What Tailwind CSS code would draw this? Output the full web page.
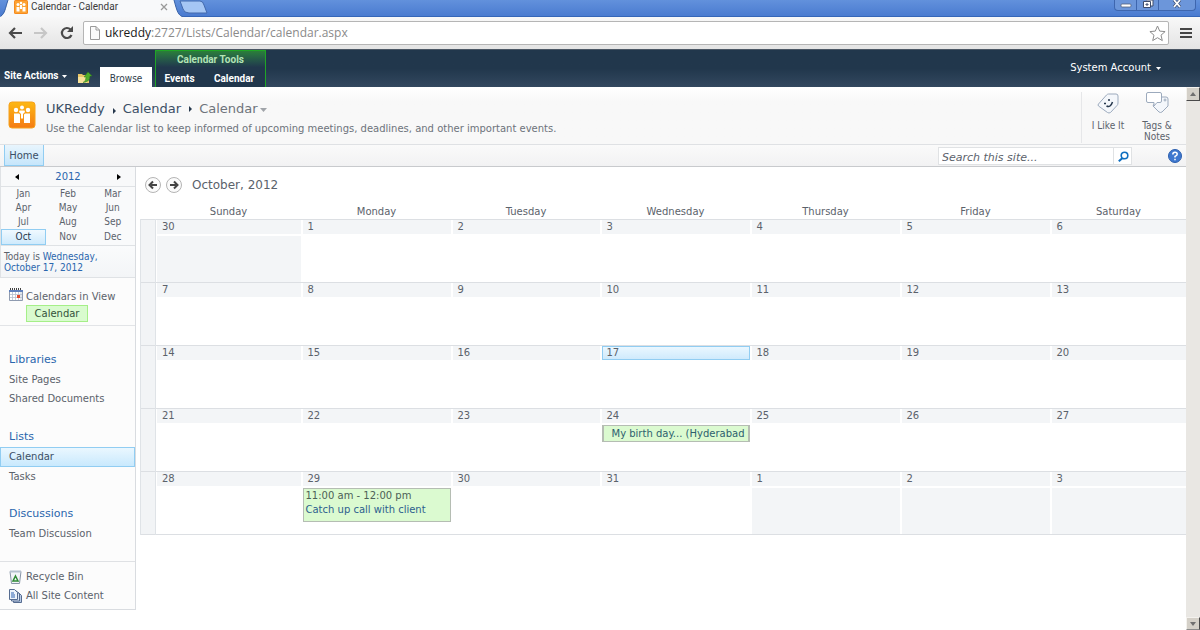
<!DOCTYPE html>
<html lang="en">
<head>
<meta charset="utf-8">
<title>Calendar - Calendar</title>
<script src="https://cdn.jsdelivr.net/npm/@tailwindcss/browser@4"></script>
</head>
<body class="flex h-screen flex-col overflow-hidden bg-white font-['DejaVu_Sans',sans-serif] text-[10px] leading-[14px] text-[#5b626b]">

<!-- Browser tab strip -->
<header class="flex h-[17px] shrink-0 items-start justify-between border-b border-[#3566b8] bg-linear-to-b from-[#6291dc] to-[#4a7bd0]">
  <div class="relative flex h-[17px] w-[208px] items-start">
    <svg class="absolute top-0 left-0" width="208" height="17" viewBox="0 0 208 17" fill="none">
      <path d="M0 17C4 15 5 11 8 0H174C177 11 178 16 184 17Z" fill="#f8f9fa"/>
      <path d="M1 16C5 13 5 9 8 0M174 0C177 11 178 16 184 17" stroke="#3a63a8"/>
      <path d="M180 1H200Q203 1 204 5L207 13H189Q184 13 183 9Z" fill="#a5c6f4" stroke="#4169ad"/>
    </svg>
    <div class="relative flex h-[14px] w-[168px] items-center pl-[14px] font-['Roboto',sans-serif] text-[10px] text-[#3a3a3a]">
      <svg width="14" height="14" viewBox="0 0 28 28"><rect width="28" height="28" rx="3" fill="#f68b1e"/><rect x="2" y="2" width="24" height="24" fill="#fca334"/><g fill="#fff"><circle cx="8" cy="9" r="3"/><circle cx="14" cy="6" r="2.500"/><circle cx="20" cy="9" r="3"/><path d="M5 14h6v9H5zM17 14h6v9h-6zM12 10h4v8h-4z"/></g></svg>
      <span class="ml-[3px] grow">Calendar - Calendar</span>
      <button aria-label="Close tab"><svg width="8" height="8" viewBox="0 0 8 8"><path d="M1 1l6 6M7 1L1 7" stroke="#9a9a9a" stroke-width="1.300"/></svg></button>
    </div>
  </div>
  <div class="mr-[4px] flex h-[11px] divide-x divide-[#3e66ae] rounded-b border border-t-0 border-[#3e66ae] bg-[#6c96da]">
    <button aria-label="Minimize" class="flex w-[22px] justify-center"><svg width="12" height="10" viewBox="0 0 12 10"><rect x="1" y="4" width="10" height="3" rx="1" fill="#fff" stroke="#52617c" stroke-width=".8"/></svg></button>
    <button aria-label="Restore" class="flex w-[22px] justify-center"><svg width="12" height="10" viewBox="0 0 12 10" fill="#fff" stroke="#3c4b6b"><path d="M4 0h7v6H9"/><path d="M1.500 1.500h7v6h-7z"/><path d="M4 4h2v1H4z"/></svg></button>
    <button aria-label="Close window" class="flex w-[36px] justify-center"><svg width="12" height="10" viewBox="0 0 12 10"><path d="M3 0l6 7M9 0L3 7" stroke="#3c4b6b" stroke-width="3"/><path d="M3 0l6 7M9 0L3 7" stroke="#fff" stroke-width="1.800"/></svg></button>
  </div>
</header>

<!-- Browser toolbar -->
<div class="flex h-[32px] shrink-0 items-center bg-linear-to-b from-[#f8f8f8] to-[#e4e4e4] pr-[8px] pl-[8px]">
  <button aria-label="Back"><svg width="14" height="14" viewBox="0 0 14 14" fill="none" stroke="#4a4a4a" stroke-width="2.200"><path d="M14 7H2M7 2L2 7l5 5"/></svg></button>
  <button aria-label="Forward" class="ml-[12px]"><svg width="14" height="14" viewBox="0 0 14 14" fill="none" stroke="#c6c6c6" stroke-width="2.200"><path d="M0 7h12M7 2l5 5-5 5"/></svg></button>
  <button aria-label="Reload" class="ml-[11px]"><svg width="15" height="14" viewBox="0 0 15 14" fill="none"><path d="M11.500 3.500A5 5 0 1 0 12.500 9" stroke="#4a4a4a" stroke-width="2.200"/><path d="M14 0v6H8z" fill="#4a4a4a"/></svg></button>
  <div class="ml-[9px] flex h-[24px] grow items-center rounded-[2px] border border-[#b5b5b5] bg-white px-[6px]">
    <svg width="10" height="14" viewBox="0 0 10 14" fill="#fafafa" stroke="#9a9a9a"><path d="M.5.5h5.500l3.500 3.500v9.500h-9zM6 .5V4h3.500"/></svg>
    <div contenteditable role="textbox" aria-label="Address" class="ml-[5px] grow font-['Open_Sans',sans-serif] text-[12px] leading-[18px] text-[#8a8a8a]"><span class="text-[#1a1a1a]">ukreddy</span>:2727/Lists/Calendar/calendar.aspx</div>
    <button aria-label="Bookmark" class="-mr-[4px]"><svg width="17" height="17" viewBox="0 0 17 17" fill="#fff" stroke="#8c8c8c"><path d="M8.500 1l2.200 5.100 5.400.5-4.100 3.600 1.300 5.400-4.800-2.900-4.800 2.900L5 10.200.9 6.600l5.400-.5z"/></svg></button>
  </div>
  <button aria-label="Menu" class="ml-[11px]"><svg width="12" height="12" viewBox="0 0 12 12"><path d="M0 2h12M0 6h12M0 10h12" stroke="#454545" stroke-width="2"/></svg></button>
</div>

<!-- Ribbon -->
<div class="flex h-[38px] shrink-0 items-end justify-between border-t border-[#4a5664] bg-linear-to-b from-[#21374c] from-50% to-[#33485f] font-['Roboto',sans-serif] font-bold text-white">
  <div class="flex h-full items-end">
    <button class="mb-[4px] ml-[4px] flex w-[74px] items-center gap-[4px] whitespace-nowrap">Site Actions <svg width="5" height="3" viewBox="0 0 5 3"><path d="M0 0h5L2.500 3z" fill="#fff"/></svg></button>
    <button aria-label="Navigate up" class="mb-[3px]"><svg width="14" height="13" viewBox="0 0 14 13"><path d="M0 3h4l1 1h6v8H0z" fill="#e9c667"/><path d="M0 6h11l-2 6H0z" fill="#f8e29a"/><path d="M5 11.500q3-1 3-5.500H6l4-5 4 4h-2q0 6-7 6.500z" fill="#52ad2b" stroke="#2e7d18" stroke-width=".5"/></svg></button>
    <button class="ml-[8px] h-[20px] w-[52px] bg-white pt-[3px] font-['DejaVu_Sans_Condensed','DejaVu_Sans',sans-serif] text-[10px] font-normal text-[#2f3c4a]">Browse</button>
    <div class="ml-[3px] flex h-full w-[111px] flex-col border-x border-t border-[#1fa526] bg-linear-to-b from-[#2a7f38] to-[#21374c] to-45%">
      <div class="pt-[2px] text-center text-[#b3e5b5]">Calendar Tools</div>
      <div class="flex pt-[5px]"><button class="w-[48px]">Events</button><button class="w-[63px]">Calendar</button></div>
    </div>
  </div>
  <button class="mr-[39px] mb-[12px] flex items-center gap-[5px] font-['DejaVu_Sans',sans-serif] font-normal">System Account <svg width="5" height="3" viewBox="0 0 5 3"><path d="M0 0h5L2.500 3z" fill="#fff"/></svg></button>
</div>

<div class="flex min-h-0 grow">
  <div class="flex min-w-0 grow flex-col">

    <!-- Title area -->
    <div class="flex h-[58px] shrink-0 border-b border-[#dfe1e4] bg-linear-to-b from-white to-[#f8f8f8] to-25%">
      <svg class="mt-[14px] ml-[8px]" width="28" height="29" viewBox="0 0 28 29"><defs><linearGradient id="o" x2="0" y2="1"><stop stop-color="#fdb813"/><stop offset="1" stop-color="#f47b14"/></linearGradient></defs><rect x="1" y="1" width="26" height="26" rx="3" fill="url(#o)" stroke="#f6a21c"/><g fill="#fff"><circle cx="8" cy="9" r="2.200"/><circle cx="14" cy="6.500" r="2"/><circle cx="20" cy="9" r="2.200"/><path d="M6 12.500h5l1 1V22H6zM17 12.500h5V22h-6v-8.500zM11.500 9.500h5l.5 1.500-2 2v4.500h-2V13l-2-2z"/></g></svg>
      <div class="ml-[10px] grow pt-[13px]">
        <h1 class="flex items-center text-[13px] leading-[18px] text-[#3b4f65]">
          <a href="#">UKReddy</a>
          <svg class="mx-[7px] mt-[3px]" width="4" height="6" viewBox="0 0 4 6"><path d="M1 0l3 3-3 3z" fill="#26384d"/></svg>
          <a href="#">Calendar</a>
          <svg class="mx-[7px]" width="4" height="6" viewBox="0 0 4 6"><path d="M1 0l3 3-3 3z" fill="#26384d"/></svg>
          <button class="flex items-center gap-[2px] text-[#6d737b]">Calendar <svg class="mt-[2px]" width="7" height="4" viewBox="0 0 7 4"><path d="M0 0h7L3.500 4z" fill="#a0a4a9"/></svg></button>
        </h1>
        <p class="mt-[4px] text-[10px] text-[#6d737b]">Use the Calendar list to keep informed of upcoming meetings, deadlines, and other important events.</p>
      </div>
      <div class="mt-[5px] mb-px flex border-l border-[#e6e7e9] pl-[5px] text-center font-['DejaVu_Sans_Condensed','DejaVu_Sans',sans-serif] leading-[11px]">
        <button class="flex w-[42px] flex-col items-center justify-start whitespace-nowrap"><svg width="22" height="22" viewBox="0 0 22 22" fill="#f4f7fb" stroke="#9caabd"><path d="M1.500 12L9.500 3q1-1 2-1h7.500q2 0 2 2v7q0 1.500-1 2.500l-6.500 7q-1.500 1-3 0L1.500 14q-1-1 0-2z"/><path d="M9.500 14q4 2 6-4" fill="none" stroke="#26384d" stroke-width="1.500"/><path d="M7 11.500h2M11 8h2" stroke="#26384d" stroke-width="1.500"/></svg><span class="mt-[6px]">I Like It</span></button>
        <button class="ml-[7px] flex w-[42px] flex-col items-center justify-start"><svg width="23" height="22" viewBox="0 0 23 22" fill="#f4f7fb" stroke="#9caabd"><path d="M12 5h8q2 0 2 2v7l-6 6q-1.500 1-3 0l-6-6z"/><path d="M2 .5h12q1.500 0 1.500 1.500v7q0 1.500-1.500 1.500h-3L8 14v-3.500H2Q.5 10.500.5 9V2Q.5.5 2 .5z" fill="#fff"/><circle cx="19" cy="8" r="1"/></svg><span class="mt-[6px]">Tags &amp; Notes</span></button>
        <span class="w-[8px]"></span>
      </div>
    </div>

    <!-- Top navigation and search -->
    <div class="flex h-[22px] shrink-0 items-stretch border-b border-[#c8cacd] bg-linear-to-b from-[#fafafa] to-[#f2f2f3] pl-[4px]">
      <a href="#" class="w-[40px] border border-t-0 border-[#91cdf2] bg-linear-to-b from-[#e8f5fd] to-[#c6e6fb] pt-[4px] text-center text-[#3b4f65]">Home</a>
      <span class="grow"></span>
      <form class="mt-[2px] flex h-[18px] border border-[#e0e2e4] bg-white" onsubmit="return false">
        <input type="text" aria-label="Search this site" placeholder="Search this site..." class="h-[17px] w-[174px] px-[3px] pt-[2px] text-[11px] leading-[15px] italic outline-none placeholder:text-[#5b626b]">
        <button aria-label="Search" class="w-[18px] border-l border-[#e0e2e4] pl-[4px]"><svg width="11" height="11" viewBox="0 0 11 11" fill="none" stroke="#0f6fc0"><circle cx="6.500" cy="4.500" r="3.300" stroke-width="1.600"/><path d="M4.500 7L.8 10.300" stroke-width="2"/></svg></button>
      </form>
      <button aria-label="Help" class="mr-[4px] ml-[36px]"><svg width="14" height="14" viewBox="0 0 14 14"><circle cx="7" cy="7" r="6.500" fill="#3e78cf" stroke="#2d5fae"/><path d="M4.800 5.500q0-2.300 2.200-2.300T9.200 5.200Q9.200 6.300 7 7.400V8.500M7 9.700v1.500" fill="none" stroke="#fff" stroke-width="1.500"/></svg></button>
    </div>

    <div class="flex min-h-0 grow">

      <!-- Left column -->
      <aside class="w-[136px] shrink-0 self-start border-r border-b border-[#d9dce0] bg-[#fcfcfc]">
        <div class="font-['DejaVu_Sans_Condensed','DejaVu_Sans',sans-serif]">
          <div class="flex h-[20px] items-center justify-between border-b border-l border-[#dfe2e5] bg-[#f8f9fa] px-[14px]">
            <button aria-label="Previous year"><svg width="4" height="6" viewBox="0 0 4 6"><path d="M4 0v6L0 3z"/></svg></button>
            <a href="#" class="font-['DejaVu_Sans',sans-serif] text-[#2a66ad]">2012</a>
            <button aria-label="Next year"><svg width="4" height="6" viewBox="0 0 4 6"><path d="M0 0v6l4-3z"/></svg></button>
          </div>
          <div class="grid grid-cols-3 border-b border-l border-[#dfe2e5] bg-[#f9fafb] text-center">
            <button class="h-[14px]">Jan</button><button>Feb</button><button>Mar</button>
            <button class="h-[14px]">Apr</button><button>May</button><button>Jun</button>
            <button class="h-[14px]">Jul</button><button>Aug</button><button>Sep</button>
            <button class="h-[16px] border border-[#91cdf2] bg-linear-to-b from-[#f0f9ff] to-[#cfeafc] text-[#26384d]">Oct</button><button>Nov</button><button>Dec</button>
          </div>
          <p class="border-b border-l border-[#dfe2e5] bg-linear-to-b from-[#fafbfc] to-[#f3f5f7] pt-[5px] pb-[4px] pl-[3px] leading-[11px]">Today is <a href="#" class="text-[#2a66ad]">Wednesday,<br>October 17, 2012</a></p>
        </div>
        <div class="h-[48px] border-b border-[#e2e4e7] pt-[10px] pl-[9px]">
          <div class="flex h-[17px] items-center gap-[3px] whitespace-nowrap">
            <svg class="shrink-0 self-start" width="14" height="13" viewBox="0 0 14 13"><path d="M.5 2.500h13v10H.5z" fill="#fff" stroke="#8f9bb0"/><path d="M0 2h14v2H0z" fill="#5f80bd"/><path d="M1 1h12" stroke="#444" stroke-width="2" stroke-dasharray="1 1"/><path d="M3.500 4v8M6.500 4v8M9.500 4v8M12 4v8M1 6.500h12M1 9.500h12" stroke="#b6bfce" stroke-width=".8"/><path d="M8 7h3v3H8z" fill="#e0482c"/></svg>
            <span>Calendars in View</span>
          </div>
          <button class="ml-[17px] block h-[17px] w-[62px] border border-[#a5ef88] bg-[#d9fbcf] text-[#33523b]">Calendar</button>
        </div>
        <nav class="pt-[24px] leading-[20px]">
          <h2 class="pl-[9px] text-[11px]"><a href="#" class="text-[#2a66ad]">Libraries</a></h2>
          <a href="#" class="block h-[19px] pl-[9px]">Site Pages</a>
          <a href="#" class="block h-[19px] pl-[9px]">Shared Documents</a>
          <h2 class="mt-[19px] pl-[9px] text-[11px]"><a href="#" class="text-[#2a66ad]">Lists</a></h2>
          <a href="#" class="block h-[20px] border border-[#91cdf2] bg-linear-to-b from-[#eaf7ff] to-[#c9e9fd] pl-[8px] leading-[18px] text-[#3b4f65]">Calendar</a>
          <a href="#" class="block h-[19px] pl-[9px]">Tasks</a>
          <h2 class="mt-[18px] pl-[9px] text-[11px]"><a href="#" class="text-[#2a66ad]">Discussions</a></h2>
          <a href="#" class="block pl-[9px]">Team Discussion</a>
        </nav>
        <div class="mt-[17px] h-[48px] border-t border-[#dfe1e4] pt-[5px] pl-[9px] leading-[20px]">
          <a href="#" class="flex h-[19px] items-center gap-[4px]"><svg width="13" height="14" viewBox="0 0 13 14"><path d="M1 1.500h11l-1.500 12h-8z" fill="#f2f5f8" stroke="#8794a6"/><path d="M1 1.500h11" stroke="#b6c2d0" stroke-width="2"/><path d="M6.500 6L9 11H4z" fill="none" stroke="#2f8a35" stroke-width="1.500"/></svg>Recycle Bin</a>
          <a href="#" class="flex h-[20px] items-center gap-[4px] whitespace-nowrap"><svg width="13" height="14" viewBox="0 0 13 14" stroke="#566c90"><path d="M4.500 3.500h5l3 3v7h-8z" fill="#b9cbe6"/><path d="M2.500 2h5l3 3v7h-8z" fill="#dbe6f5"/><path d="M.5.5h5l3 3v7h-8z" fill="#eef4fb"/><path d="M2 4h3M2 6h4M2 8h4" stroke="#2f62b0"/></svg>All Site Content</a>
        </div>
      </aside>

      <!-- Month view -->
      <main class="ml-[4px] min-w-0 grow">
        <div class="flex h-[38px] items-center pb-[3px] pl-[5px]">
          <button aria-label="Previous month"><svg width="16" height="16" viewBox="0 0 16 16"><circle cx="8" cy="8" r="7.500" fill="#fbfbfb" stroke="#b4b4b4"/><path d="M12 8H6M8 4.500L4.500 8 8 11.500" fill="none" stroke="#444" stroke-width="2"/></svg></button>
          <button aria-label="Next month" class="ml-[5px]"><svg width="16" height="16" viewBox="0 0 16 16"><circle cx="8" cy="8" r="7.500" fill="#fbfbfb" stroke="#b4b4b4"/><path d="M4 8h6M8 4.500L11.500 8 8 11.500" fill="none" stroke="#444" stroke-width="2"/></svg></button>
          <h2 class="ml-[10px] text-[12px] text-[#5b626b]">October, 2012</h2>
        </div>
        <table class="w-full table-fixed border-collapse text-left">
          <colgroup><col class="w-[15px]"><col class="w-[146px]"><col class="w-[150px]"><col class="w-[149px]"><col class="w-[150px]"><col class="w-[150px]"><col class="w-[150px]"><col class="w-[136px]"></colgroup>
          <thead><tr class="h-[14px] text-center"><td></td><th class="p-0 font-normal">Sunday</th><th class="p-0 font-normal">Monday</th><th class="p-0 font-normal">Tuesday</th><th class="p-0 font-normal">Wednesday</th><th class="p-0 font-normal">Thursday</th><th class="p-0 font-normal">Friday</th><th class="p-0 font-normal">Saturday</th></tr></thead>
          <tbody id="weeks"></tbody>
        </table>
      </main>
    </div>
  </div>

  <!-- Page scrollbar -->
  <div class="flex w-[14px] shrink-0 flex-col justify-between bg-[#e9e7e3]">
    <button aria-label="Scroll up" class="flex h-[14px] items-center justify-center border border-t-[#f4f2ee] border-r-[#4a4a4a] border-b-[#4a4a4a] border-l-[#f4f2ee] bg-[#d4d0c8]"><svg width="6" height="4" viewBox="0 0 6 4"><path d="M0 4h6L3 0z" fill="#6f6f6f"/></svg></button>
    <button aria-label="Scroll down" class="flex h-[13px] items-center justify-center border border-t-[#f4f2ee] border-r-[#4a4a4a] border-b-[#8a8a8a] border-l-[#f4f2ee] bg-[#d4d0c8]"><svg width="6" height="4" viewBox="0 0 6 4"><path d="M0 0h6L3 4z" fill="#6f6f6f"/></svg></button>
  </div>
</div>

<script>
  const weeks = [
    [30, 1, 2, 3, 4, 5, 6],
    [7, 8, 9, 10, 11, 12, 13],
    [14, 15, 16, 17, 18, 19, 20],
    [21, 22, 23, 24, 25, 26, 27],
    [28, 29, 30, 31, 1, 2, 3]
  ];
  const events = {
    24: '<a href="#" class="mr-px mt-[2px] block h-[17px] overflow-hidden border border-x-2 border-[#b5bdb3] bg-[#dbfad0] pl-[8px] leading-[15px] whitespace-nowrap text-[#2d5f6e]">My birth day... (Hyderabad</a>',
    29: '<a href="#" class="mr-px mt-[2px] block h-[34px] overflow-hidden border border-[#b5bdb3] bg-[#dbfad0] pl-[2px] whitespace-nowrap text-[#4c5f57]">11:00 am - 12:00 pm<br><span class="text-[#2d5f8e]">Catch up call with client</span></a>'
  };
  document.getElementById('weeks').innerHTML = weeks.map((week, w) =>
    '<tr class="h-[63px] border-y border-[#dcdfe3] align-top"><td class="border-l border-r border-[#dfe3e7] bg-[#f2f4f6] p-0"></td>' +
    week.map((day, d) => {
      const outside = (w === 0 && d === 0) || (w === 4 && d > 3);
      const today = w === 2 && day === 17;
      const event = !outside && (w === 3 || w === 4) && events[day] || '';
      const band = today
        ? 'mr-px h-[14px] border border-[#91cdf2] bg-linear-to-b from-[#eaf7ff] to-[#cfeafc] pl-[4px] leading-[12px]'
        : 'mr-px h-[14px] bg-[#f3f5f7] pl-[5px]';
      return '<td class="p-0 pl-px"><div class="' + band + '">' + day + '</div>' +
        (outside ? '<div class="mt-[2px] mr-px h-[46px] bg-[#f3f5f7]"></div>' : event) + '</td>';
    }).join('') + '</tr>').join('');
</script>
</body>
</html>
